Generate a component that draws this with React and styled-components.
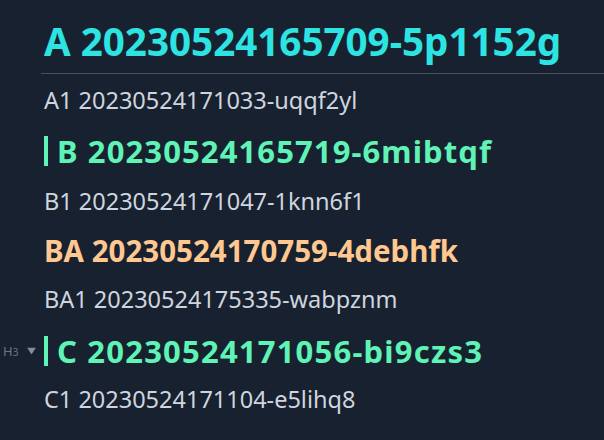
import React from 'react';
import styled, { createGlobalStyle } from 'styled-components';

const colours = {
  bg: '#172130',
  text: '#cfd5de',
  h1: '#2de4e2',
  h2: '#5ff3b6',
  h3: '#ffc890',
  rule: '#4a525e',
  gutter: '#6e7683'
};

const GlobalStyle = createGlobalStyle`
  html, body {
    margin: 0;
    padding: 0;
    background: ${colours.bg};
  }
  body {
    font-family: "Noto Sans", "Open Sans", sans-serif;
    color: ${colours.text};
  }
`;

const Page = styled.div`
  width: 604px;
  height: 440px;
  overflow: hidden;
  padding-left: 44px;
  box-sizing: border-box;
  display: flex;
  flex-direction: column;
`;

const Title = styled.h1`
  margin: 0 0 0 -3px;
  padding: 8px 0 0 3px;
  height: 65px;
  display: flex;
  align-items: center;
  border-bottom: 1px solid ${colours.rule};
  font-size: 38.6px;
  font-weight: 700;
  color: ${colours.h1};
  white-space: nowrap;
`;

const Block = styled.div`
  position: relative;
  height: ${(p) => p.$h}px;
  display: flex;
  align-items: center;
  white-space: nowrap;
`;

const Para = styled.span`
  font-size: 23.5px;
  color: ${colours.text};
`;

const Heading = styled.span`
  display: flex;
  align-items: center;
  font-weight: 700;
  font-size: ${(p) => p.$size}px;
  letter-spacing: ${(p) => p.$track || 0}px;
  color: ${(p) => p.$colour};
  gap: 9px;

  ${(p) => p.$bar && `
    &::before {
      content: '';
      display: block;
      width: 4px;
      height: 30px;
      background: ${p.$colour};
    }
  `}
`;

const Gutter = styled.div`
  position: absolute;
  left: -41px;
  top: 50%;
  transform: translateY(-50%);
  display: flex;
  align-items: center;
  gap: 9px;
  color: ${colours.gutter};
`;

const GutterTag = styled.span`
  font-size: 13px;
  line-height: 1;

  small {
    font-size: 10px;
  }
`;

function Caret() {
  return (
    <svg width="9" height="7" viewBox="0 0 9 7">
      <polygon points="0,0 9,0 4.5,7" fill="#868c96" />
    </svg>
  );
}

export default function App() {
  return (
    <>
      <GlobalStyle />
      <Page>
        <Title>A 20230524165709-5p1152g</Title>
        <Block $h={52}>
          <Para>A1 20230524171033-uqqf2yl</Para>
        </Block>
        <Block $h={50}>
          <Heading $size={31} $track={1.1} $colour={colours.h2} $bar>B 20230524165719-6mibtqf</Heading>
        </Block>
        <Block $h={49}>
          <Para>B1 20230524171047-1knn6f1</Para>
        </Block>
        <Block $h={50}>
          <Heading $size={29.5} $colour={colours.h3}>BA 20230524170759-4debhfk</Heading>
        </Block>
        <Block $h={48}>
          <Para>BA1 20230524175335-wabpznm</Para>
        </Block>
        <Block $h={56}>
          <Gutter>
            <GutterTag>H<small>3</small></GutterTag>
            <Caret />
          </Gutter>
          <Heading $size={31} $track={1.2} $colour={colours.h2} $bar>C 20230524171056-bi9czs3</Heading>
        </Block>
        <Block $h={39}>
          <Para>C1 20230524171104-e5lihq8</Para>
        </Block>
      </Page>
    </>
  );
}
